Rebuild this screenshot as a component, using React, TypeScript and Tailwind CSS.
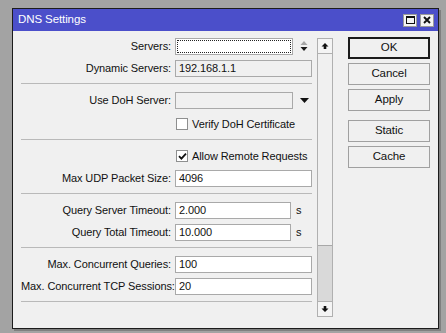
import React from "react"

const font = { fontFamily: '"Liberation Sans", Arial, sans-serif' }

function Label({ children }: { children: React.ReactNode }) {
  return (
    <div className="w-[151px] shrink-0 text-right pr-[1px] whitespace-nowrap">{children}</div>
  )
}

function Field({
  value = "",
  width = "w-[137px]",
  disabled = false,
  focused = false,
}: {
  value?: string
  width?: string
  disabled?: boolean
  focused?: boolean
}) {
  return (
    <div
      className={`${width} h-[17px] border border-[#a9a9a9] ${
        disabled ? "bg-[#f0f0f0]" : "bg-white"
      } flex items-center px-[3px] relative`}
    >
      {focused && (
        <div className="absolute inset-[1px] border border-dotted border-[#222]" />
      )}
      <span>{value}</span>
    </div>
  )
}

function Row({ label, children, className = "" }: { label?: string; children: React.ReactNode; className?: string }) {
  return (
    <div className={`h-[22px] flex items-center ${className}`}>
      <Label>{label}</Label>
      <div className="ml-[3px] flex items-center">{children}</div>
    </div>
  )
}

function Separator() {
  return <div className="mt-[4px] mb-[5px] h-px bg-[#b9b9b9]" />
}

function Check({ checked = false }: { checked?: boolean }) {
  return (
    <div className="w-[12px] h-[12px] border border-[#8e8f8f] bg-white flex items-center justify-center ml-[1px]">
      {checked && (
        <svg width="9" height="9" viewBox="0 0 9 9">
          <path d="M1 4.2 L3.4 6.6 L8 1.6" stroke="#111" strokeWidth="1.8" fill="none" />
        </svg>
      )}
    </div>
  )
}

function Btn({ children, def = false, className = "" }: { children: React.ReactNode; def?: boolean; className?: string }) {
  return (
    <div
      className={`h-[22px] w-[82px] flex items-center justify-center bg-[#f0f0f0] ${
        def ? "border-2 border-[#1b1b1b]" : "border border-[#a0a0a0]"
      } ${className}`}
    >
      <span className="text-[11.5px]">{children}</span>
    </div>
  )
}

function ScrollArrow({ up }: { up?: boolean }) {
  return (
    <svg width="8" height="8" viewBox="0 0 8 8" className={up ? "" : "rotate-180"}>
      <path d="M4 1 L7.5 4.5 L5.3 4.5 L5.3 7 L2.7 7 L2.7 4.5 L0.5 4.5 Z" fill="#111" />
    </svg>
  )
}

export default function App() {
  return (
    <div
      className="w-[446px] h-[333px] bg-[#a3a3a3] pt-[8px] pl-[12px] overflow-hidden text-[11px] tracking-[-0.1px] text-[#111]"
      style={font}
    >
      <div className="w-[427px] h-[321px] border border-[#1c1c1c] bg-[#f0f0f0] shadow-[2px_2px_0_#808080] flex flex-col">
        {/* title bar */}
        <div className="h-[22px] bg-[#4b4fca] flex items-center pl-[5px] pr-[4px] text-white">
          <span className="text-[11.5px]">DNS Settings</span>
          <div className="ml-auto flex gap-[3px]">
            <div className="w-[14px] h-[13px] bg-[#f4f4f4] border border-[#9a9a9a] flex items-center justify-center">
              <div className="w-[9px] h-[8px] border border-[#111] border-t-2" />
            </div>
            <div className="w-[14px] h-[13px] bg-[#f4f4f4] border border-[#9a9a9a] flex items-center justify-center">
              <svg width="8" height="8" viewBox="0 0 8 8">
                <path d="M1 1 L7 7 M7 1 L1 7" stroke="#111" strokeWidth="1.9" />
              </svg>
            </div>
          </div>
        </div>

        {/* body */}
        <div className="flex flex-1">
          <div className="pl-[8px] pt-[4px] w-[299px] flex flex-col">
            <Row label="Servers:">
              <Field width="w-[118px]" focused />
              <svg width="8" height="12" viewBox="0 0 8 12" className="ml-[7px]">
                <path d="M0.5 5 L4 1 L7.5 5 Z" fill="#a6a6a6" />
                <path d="M0.5 7 L4 11 L7.5 7 Z" fill="#1a1a1a" />
              </svg>
            </Row>
            <Row label="Dynamic Servers:">
              <Field value="192.168.1.1" disabled />
            </Row>
            <Separator />
            <Row label="Use DoH Server:">
              <Field width="w-[118px]" disabled />
              <svg width="9" height="5" viewBox="0 0 9 5" className="ml-[7px]">
                <path d="M0 0 L9 0 L4.5 5 Z" fill="#111" />
              </svg>
            </Row>
            <Row className="mt-[2px]">
              <Check />
              <span className="ml-[4px]">Verify DoH Certificate</span>
            </Row>
            <Separator />
            <Row>
              <Check checked />
              <span className="ml-[4px]">Allow Remote Requests</span>
            </Row>
            <Row label="Max UDP Packet Size:">
              <Field value="4096" />
            </Row>
            <Separator />
            <Row label="Query Server Timeout:">
              <Field value="2.000" width="w-[116px]" />
              <span className="ml-[5px]">s</span>
            </Row>
            <Row label="Query Total Timeout:">
              <Field value="10.000" width="w-[116px]" />
              <span className="ml-[5px]">s</span>
            </Row>
            <Separator />
            <Row label="Max. Concurrent Queries:">
              <Field value="100" />
            </Row>
            <Row label="Max. Concurrent TCP Sessions:">
              <Field value="20" />
            </Row>
            <Separator />
          </div>

          {/* scrollbar */}
          <div className="mt-[7px] ml-[5px] w-[16px] h-[279px] border border-[#b0b0b0] flex flex-col bg-[#d9d9d9]">
            <div className="h-[15px] border-b border-[#b0b0b0] bg-[#f4f4f4] flex items-center justify-center">
              <ScrollArrow up />
            </div>
            <div className="h-[192px] bg-[#f0f0f0] border-b border-[#a8a8a8]" />
            <div className="flex-1" />
            <div className="h-[15px] border-t border-[#b0b0b0] bg-[#f4f4f4] flex items-center justify-center">
              <ScrollArrow />
            </div>
          </div>

          {/* buttons */}
          <div className="ml-[15px] pt-[6px] flex flex-col gap-[4px]">
            <Btn def>OK</Btn>
            <Btn>Cancel</Btn>
            <Btn>Apply</Btn>
            <Btn className="mt-[5px]">Static</Btn>
            <Btn>Cache</Btn>
          </div>
        </div>
      </div>
    </div>
  )
}
